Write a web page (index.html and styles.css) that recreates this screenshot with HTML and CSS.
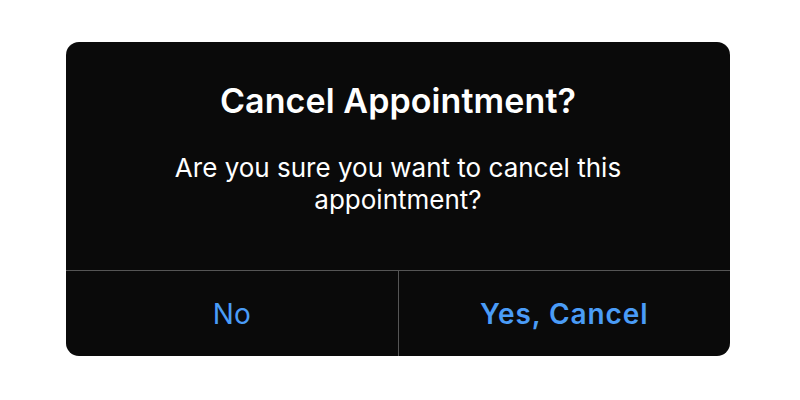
FILE: index.html
```html
<!DOCTYPE html>
<html>
<head>
<meta charset="utf-8">
<link rel="stylesheet" href="styles.css">
</head>
<body>
<div class="page">
  <div class="dialog">
    <div class="content">
      <div class="title">Cancel Appointment?</div>
      <div class="message">Are you sure you want to cancel this appointment?</div>
    </div>
    <div class="actions">
      <div class="btn">No</div>
      <div class="btn primary">Yes, Cancel</div>
    </div>
  </div>
</div>
</body>
</html>
```

FILE: styles.css
```css
html, body {
  margin: 0;
  padding: 0;
  background: #ffffff;
}
.page {
  width: 800px;
  height: 400px;
  display: flex;
  justify-content: flex-start;
  padding: 42px 0 0 66px;
  box-sizing: border-box;
}
.dialog {
  width: 664px;
  height: 314px;
  background: #0a0a0a;
  border-radius: 13px;
  display: flex;
  flex-direction: column;
  overflow: hidden;
  font-family: Inter, "Noto Sans", sans-serif;
  color: #ffffff;
}
.content {
  flex: 1;
  display: flex;
  flex-direction: column;
  align-items: center;
  padding: 39px 90px 0;
  text-align: center;
}
.title {
  font-size: 34px;
  font-weight: 600;
  line-height: 40px;
  letter-spacing: 0.1px;
}
.message {
  margin-top: 31px;
  font-size: 26px;
  line-height: 32px;
  font-weight: 400;
}
.actions {
  height: 86px;
  flex: none;
  box-sizing: border-box;
  border-top: 1px solid #555555;
  display: flex;
}
.btn {
  flex: 1;
  display: flex;
  align-items: center;
  justify-content: center;
  color: #4a9cf7;
  font-size: 28px;
  font-weight: 400;
}
.btn + .btn {
  border-left: 1px solid #555555;
}
.btn.primary {
  font-weight: 600;
  letter-spacing: 0.9px;
}
```
